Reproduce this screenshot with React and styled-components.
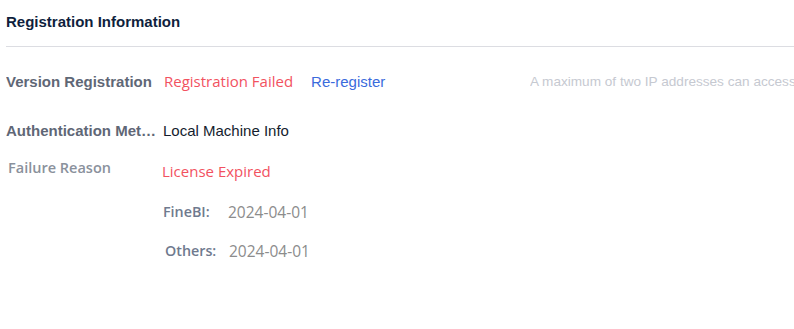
import React from "react";
import styled, { createGlobalStyle } from "styled-components";

const Global = createGlobalStyle`
  html, body { margin: 0; padding: 0; background: #fff; }
  body { font-family: "Liberation Sans", Arial, sans-serif; }
`;

const Page = styled.div`
  width: 794px;
  height: 329px;
  padding-left: 6px;
  box-sizing: border-box;
  overflow: hidden;
`;

const Header = styled.div`
  height: 47px;
  box-sizing: border-box;
  padding-top: 12px;
  border-bottom: 1px solid #dcdde2;
`;

const Title = styled.h2`
  margin: 0;
  font-size: 15px;
  font-weight: 700;
  color: #0f1f3d;
  line-height: 20px;
`;

const Row = styled.div`
  display: flex;
  align-items: center;
  height: ${(p) => p.$h}px;
  white-space: nowrap;
`;

const Label = styled.div`
  width: 157px;
  flex: none;
  font-size: 15px;
  font-weight: 700;
  color: #5f6776;
  overflow: hidden;
  text-overflow: ellipsis;
  white-space: nowrap;
`;

const SoftLabel = styled.div`
  width: 154px;
  flex: none;
  padding-left: 2px;
  margin-bottom: 3px;
  font-family: "Open Sans", sans-serif;
  font-size: 14.5px;
  font-weight: 600;
  color: #8a919c;
`;

const Status = styled.span`
  font-family: "Open Sans", sans-serif;
  font-size: 15px;
  color: #f2525f;
  margin-left: ${(p) => p.$ml || 0}px;
  margin-top: ${(p) => p.$mt || 0}px;
`;

const Link = styled.a`
  margin-left: 18px;
  font-size: 15px;
  color: #3a6bdc;
  cursor: pointer;
`;

const Hint = styled.span`
  margin-left: auto;
  width: 264px;
  flex: none;
  overflow: hidden;
  font-size: 13.6px;
  color: #c6c9d1;
`;

const Value = styled.span`
  font-size: 15px;
  color: #141c2e;
`;

const SubRow = styled.div`
  display: flex;
  align-items: center;
  height: 39px;
  padding-left: ${(p) => p.$pl}px;
  font-family: "Open Sans", sans-serif;
`;

const SubLabel = styled.span`
  width: ${(p) => p.$w}px;
  font-size: 14.3px;
  font-weight: 600;
  color: #6f7a8e;
`;

const SubValue = styled.span`
  font-size: 15.5px;
  color: #8c8c8c;
`;

export default function App() {
  return (
    <>
      <Global />
      <Page>
        <Header>
          <Title>Registration Information</Title>
        </Header>
        <Row $h={68}>
          <Label>Version Registration</Label>
          <Status $ml={1}>Registration Failed</Status>
          <Link>Re-register</Link>
          <Hint>A maximum of two IP addresses can access the system</Hint>
        </Row>
        <Row $h={30}>
          <Label title="Authentication Method">Authentication Method</Label>
          <Value>Local Machine Info</Value>
        </Row>
        <Row $h={47}>
          <SoftLabel>Failure Reason</SoftLabel>
          <Status $mt={4}>License Expired</Status>
        </Row>
        <SubRow $pl={157}>
          <SubLabel $w={65}>FineBI:</SubLabel>
          <SubValue>2024-04-01</SubValue>
        </SubRow>
        <SubRow $pl={159}>
          <SubLabel $w={64}>Others:</SubLabel>
          <SubValue>2024-04-01</SubValue>
        </SubRow>
      </Page>
    </>
  );
}
